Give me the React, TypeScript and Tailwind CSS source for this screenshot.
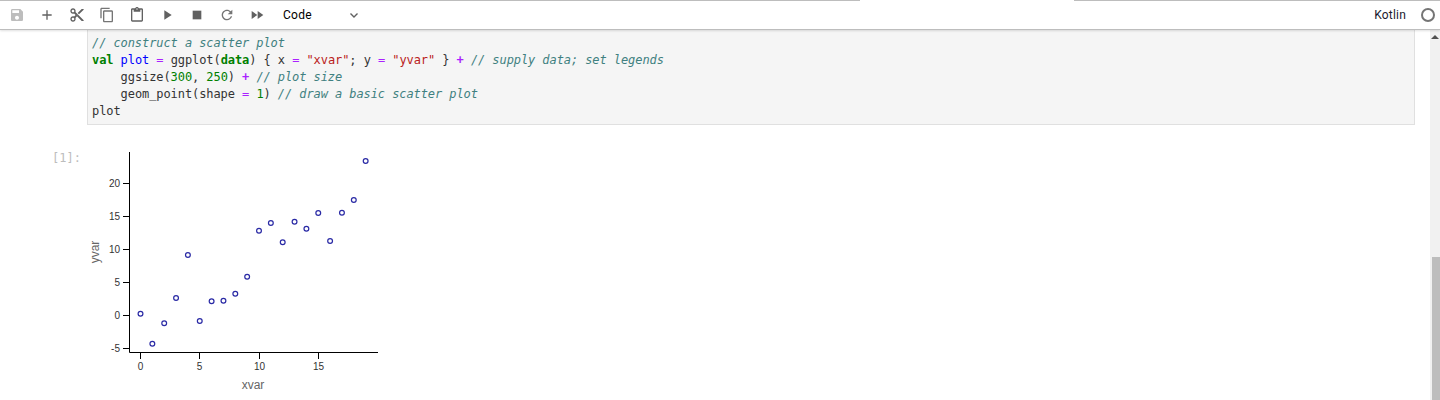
// App.tsx
// Notebook cell with toolbar, Kotlin code and a scatter plot output

const iconPaths = [
  { name: 'save', d: 'M17 3H5c-1.11 0-2 .9-2 2v14c0 1.1.89 2 2 2h14c1.1 0 2-.9 2-2V7l-4-4zm-5 16c-1.66 0-3-1.34-3-3s1.34-3 3-3 3 1.34 3 3-1.34 3-3 3zm3-10H5V5h10v4z', color: '#bdbdbd' },
  { name: 'add', d: 'M19 13h-6v6h-2v-6H5v-2h6V5h2v6h6v2z', color: '#616161' },
  { name: 'cut', d: 'M9.64 7.64c.23-.5.36-1.05.36-1.64 0-2.21-1.79-4-4-4S2 3.79 2 6s1.79 4 4 4c.59 0 1.14-.13 1.64-.36L10 12l-2.36 2.36C7.14 14.13 6.59 14 6 14c-2.21 0-4 1.79-4 4s1.79 4 4 4 4-1.79 4-4c0-.59-.13-1.14-.36-1.64L12 14l7 7h3v-1L9.64 7.64zM6 8c-1.1 0-2-.89-2-2s.9-2 2-2 2 .89 2 2-.9 2-2 2zm0 12c-1.1 0-2-.89-2-2s.9-2 2-2 2 .89 2 2-.9 2-2 2zm6-7.5c-.28 0-.5-.22-.5-.5s.22-.5.5-.5.5.22.5.5-.22.5-.5.5zM19 3l-6 6 2 2 7-7V3z', color: '#616161' },
  { name: 'copy', d: 'M16 1H4c-1.1 0-2 .9-2 2v14h2V3h12V1zm3 4H8c-1.1 0-2 .9-2 2v14c0 1.1.9 2 2 2h11c1.1 0 2-.9 2-2V7c0-1.1-.9-2-2-2zm0 16H8V7h11v14z', color: '#757575' },
  { name: 'paste', d: 'M19 2h-4.18C14.4.84 13.3 0 12 0c-1.3 0-2.4.84-2.82 2H5c-1.1 0-2 .9-2 2v16c0 1.1.9 2 2 2h14c1.1 0 2-.9 2-2V4c0-1.1-.9-2-2-2zm-7 0c.55 0 1 .45 1 1s-.45 1-1 1-1-.45-1-1 .45-1 1-1zm7 18H5V4h2v3h10V4h2v16z', color: '#616161' },
  { name: 'run', d: 'M8 5v14l11-7z', color: '#616161' },
  { name: 'stop', d: 'M5.5 5.5h13v13h-13z', color: '#616161' },
  { name: 'restart', d: 'M17.65 6.35C16.2 4.9 14.21 4 12 4c-4.42 0-7.99 3.58-7.99 8s3.57 8 7.99 8c3.73 0 6.84-2.55 7.73-6h-2.08c-.82 2.33-3.04 4-5.65 4-3.31 0-6-2.69-6-6s2.69-6 6-6c1.66 0 3.14.69 4.22 1.78L13 11h7V4l-2.35 2.35z', color: '#757575' },
  { name: 'fast-forward', d: 'M4 18l8.5-6L4 6v12zm9-12v12l8.5-6L13 6z', color: '#616161' },
]

// y pixel of every point, x runs 0..19
const points = [313.7, 343.7, 323.3, 298, 255, 321, 301.3, 300.7, 293.7, 276.7, 230.7, 223, 242.3, 221.7, 228.7, 213, 241, 212.7, 200, 161]

const yTicks = [
  { label: '20', y: 183 },
  { label: '15', y: 216 },
  { label: '10', y: 249 },
  { label: '5', y: 282 },
  { label: '0', y: 315 },
  { label: '-5', y: 348 },
]

const xTicks = [
  { label: '0', x: 140.5 },
  { label: '5', x: 199.5 },
  { label: '10', x: 259.5 },
  { label: '15', x: 318.5 },
]

function Toolbar() {
  return (
    <div className="h-[30px] bg-white border-b border-[#bdbdbd] shadow-[0_1px_2px_rgba(0,0,0,0.12)] relative z-10">
      <div className="flex h-px">
        <div className="w-[860px] bg-[#bdbdbd]" />
        <div className="w-[214px]" />
        <div className="flex-1 bg-[#bdbdbd]" />
      </div>
      <div className="flex items-center h-[28px] pl-[2px]">
        {iconPaths.map((icon) => (
          <div key={icon.name} className="w-[30px] h-[28px] flex items-center justify-center">
            <svg viewBox="0 0 24 24" className="w-4 h-4" fill={icon.color}>
              <path d={icon.d} />
            </svg>
          </div>
        ))}
        <span className="ml-[11px] text-[12px] tracking-[0.3px] text-black">Code</span>
        <svg viewBox="0 0 12 12" className="w-3 h-3 ml-[36px]" fill="none" stroke="#616161" strokeWidth="1.4">
          <path d="M2.5 4.5l3.5 3.5 3.5-3.5" />
        </svg>
        <span className="ml-auto text-[12px] tracking-[0.2px] text-[#1a1a2e]">Kotlin</span>
        <div className="w-[14px] h-[14px] rounded-full border-2 border-[#757575] ml-[15px] mr-[5px]" />
      </div>
    </div>
  )
}

function CodeCell() {
  return (
    <div className="ml-[87px] mr-[25px] h-[95px] bg-[#f5f5f5] border border-t-0 border-[#e0e0e0] px-[4px] pt-[5px] font-['DejaVu_Sans_Mono',monospace] text-[12px] leading-[17px] tracking-[-0.08px] text-[#333] whitespace-pre">
      <div><i className="text-[#408080]">// construct a scatter plot</i></div>
      <div>
        <b className="text-[#008000]">val</b> <span className="text-[#0000ff]">plot</span> <span className="text-[#aa22ff]">=</span> ggplot(<b className="text-[#008000]">data</b>) {'{'} x <span className="text-[#aa22ff]">=</span> <span className="text-[#ba2121]">"xvar"</span>; y <span className="text-[#aa22ff]">=</span> <span className="text-[#ba2121]">"yvar"</span> {'}'} <b className="text-[#aa22ff]">+</b> <i className="text-[#408080]">// supply data; set legends</i>
      </div>
      <div>
        {'    '}ggsize(<span className="text-[#008000]">300</span>, <span className="text-[#008000]">250</span>) <b className="text-[#aa22ff]">+</b> <i className="text-[#408080]">// plot size</i>
      </div>
      <div>
        {'    '}geom_point(shape <span className="text-[#aa22ff]">=</span> <span className="text-[#008000]">1</span>) <i className="text-[#408080]">// draw a basic scatter plot</i>
      </div>
      <div>plot</div>
    </div>
  )
}

function ScatterPlot() {
  // viewBox keeps the page coordinates of the plot, offset by its top left corner
  return (
    <svg viewBox="87 150 300 250" className="w-[300px] h-[250px] block" fontFamily="'Liberation Sans', sans-serif">
      <path d="M129.5 152V352.5H378" fill="none" stroke="#000" strokeWidth="1" />
      {yTicks.map((tick) => (
        <g key={tick.label}>
          <line x1="123" x2="129" y1={tick.y + 0.5} y2={tick.y + 0.5} stroke="#000" />
          <text x="120" y={tick.y + 4} textAnchor="end" fontSize="10" fill="#333">{tick.label}</text>
        </g>
      ))}
      {xTicks.map((tick) => (
        <g key={tick.label}>
          <line x1={tick.x} x2={tick.x} y1="353" y2="359" stroke="#000" />
          <text x={tick.x} y="369.5" textAnchor="middle" fontSize="10" fill="#333">{tick.label}</text>
        </g>
      ))}
      <text x="253" y="389" textAnchor="middle" fontSize="12" fill="#666">xvar</text>
      <text transform="translate(99 252) rotate(-90)" textAnchor="middle" fontSize="12" fill="#666">yvar</text>
      {points.map((y, i) => (
        <circle key={i} cx={140.5 + i * 11.85} cy={y} r="2.4" fill="#fff" stroke="#2a2aa5" strokeWidth="1.2" />
      ))}
    </svg>
  )
}

export default function App() {
  return (
    <div className="relative h-[400px] overflow-hidden bg-white font-['Roboto',sans-serif]">
      <Toolbar />
      <CodeCell />
      <div className="flex mt-[25px]">
        <div className="w-[87px] pr-[6px] text-right font-['DejaVu_Sans_Mono',monospace] text-[12px] leading-[17px] text-[#bdbdbd]">[1]:</div>
        <ScatterPlot />
      </div>
      {/* page scrollbar */}
      <div className="absolute right-0 top-[30px] bottom-0 w-[10px] bg-[#f1f1f1] flex flex-col items-end">
        <div className="w-0 h-0 mt-[5px] mr-[1px] border-x-[4px] border-x-transparent border-b-[4px] border-b-[#505050]" />
        <div className="w-[8px] mt-[218px] flex-1 bg-[#bdbdbd]" />
      </div>
    </div>
  )
}
